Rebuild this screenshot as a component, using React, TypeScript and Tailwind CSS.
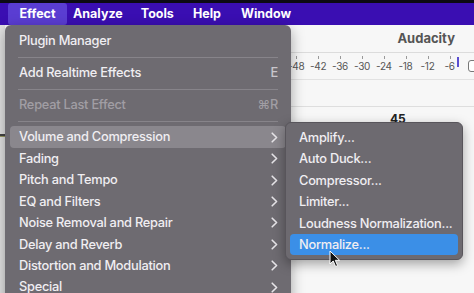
import type { ReactNode } from "react"

const font = { fontFamily: "Inter, 'Noto Sans', sans-serif" }

const Chevron = () => (
  <svg width="7" height="11" viewBox="0 0 7 11" className="shrink-0">
    <path d="M1.2 1.2 L5.6 5.5 L1.2 9.8" fill="none" stroke="#e6e4e8" strokeWidth="1.6" strokeLinecap="round" strokeLinejoin="round" />
  </svg>
)

const Separator = () => (
  <div className="h-[10px] flex items-center px-[13px]">
    <div className="h-px w-full bg-[#87848a]" />
  </div>
)

const Item = ({
  label,
  right,
  active,
  disabled,
  tall,
}: {
  label: string
  right?: ReactNode
  active?: boolean
  disabled?: boolean
  tall?: boolean
}) => (
  <div className={`${tall ? "h-[22px]" : "h-[21.4px]"} px-[5px]`}>
    <div
      className={`h-full flex items-center justify-between pl-[9px] pr-[8px] rounded-[4px] whitespace-nowrap ${
        active ? "bg-[#8a878d]" : ""
      } ${disabled ? "text-[#a19ea4]" : "text-[#f0eef2]"}`}
    >
      <span>{label}</span>
      {right}
    </div>
  </div>
)

const submenuItems = ["Volume and Compression", "Fading", "Pitch and Tempo", "EQ and Filters", "Noise Removal and Repair", "Delay and Reverb", "Distortion and Modulation", "Special"]

const volumeItems = ["Amplify...", "Auto Duck...", "Compressor...", "Limiter...", "Loudness Normalization...", "Normalize..."]

const ruler = ["-48", "-42", "-36", "-30", "-24", "-18", "-12", "-6"]

export default function App() {
  return (
    <div className="relative w-[474px] h-[293px] overflow-hidden bg-[#f4f4f4] flex flex-col" style={font}>
      <div className="h-[3px] bg-[#0c0a14]" />
      {/* menu bar */}
      <div className="h-[22px] bg-[#3a0eb2] flex items-center text-[12.5px] font-bold text-white pl-[8px] whitespace-nowrap">
        <div className="h-full w-[59px] flex items-center justify-center bg-[#5a3dd2] rounded-[3px]">Effect</div>
        <div className="ml-[6px]">Analyze</div>
        <div className="ml-[18px]">Tools</div>
        <div className="ml-[19px]">Help</div>
        <div className="ml-[20px]">Window</div>
      </div>

      {/* app window behind */}
      <div className="flex-1 flex">
        <div className="w-[5px] bg-[#e3e3e3] flex flex-col pt-[109px]">
          <div className="h-[2px] bg-[#444]" />
          <div className="h-px bg-[#9a9a60]" />
        </div>
        <div className="flex-1 bg-[#f7f7f7] flex flex-col pl-[283px] text-[#4a4a4a]">
          <div className="h-[27px] flex items-center justify-end pr-[19px] text-[13px] font-bold text-[#555]">Audacity</div>
          <div className="h-px bg-[#dcdcdc]" />
          <div className="h-[26px] flex items-center gap-[7px] text-[10px] text-[#555] tracking-[-0.3px] relative">
            {ruler.map((n) => (
              <div key={n} className="relative w-[15px] text-center">
                <div className="absolute left-1/2 -top-[3px] w-px h-[3px] bg-[#999]" />
                {n}
              </div>
            ))}
            <div className="absolute left-[169px] top-[4px] w-[2px] h-[10px] bg-[#5a4fd0]" />
            <div className="absolute left-[180px] top-[7px] w-[10px] h-[12px] rounded-[3px] bg-white border border-[#777]" />
          </div>
          <div className="h-px bg-[#e2e2e2]" />
          <div className="h-[26px]" />
          <div className="h-px bg-[#dedede]" />
          <div className="pl-[102px] pt-[3px] text-[12px] font-bold text-[#222]">45</div>
        </div>
      </div>

      {/* Effect menu */}
      <div className="absolute left-[5px] top-[25px] w-[286px] h-[280px] bg-[#6e6b71] rounded-[6px] shadow-[0_4px_14px_rgba(0,0,0,0.35)] pt-[5px] text-[12.8px] tracking-[-0.25px] font-medium">
        <Item label="Plugin Manager" tall />
        <Separator />
        <Item label="Add Realtime Effects" tall right={<span className="text-[#c9c6cc]">E</span>} />
        <Separator />
        <Item label="Repeat Last Effect" tall disabled right={<span>⌘R</span>} />
        <Separator />
        {submenuItems.map((s, i) => (
          <Item key={s} label={s} tall={i === 0} active={i === 0} right={<Chevron />} />
        ))}
      </div>

      {/* Volume and Compression submenu */}
      <div className="absolute left-[285px] top-[122px] w-[178px] h-[138px] bg-[#6d6a70] rounded-[6px] border border-[#58555b] shadow-[0_4px_12px_rgba(0,0,0,0.35)] pt-[4px] text-[12.8px] tracking-[-0.25px] font-medium">
        {volumeItems.map((s, i) => (
          <div key={s} className="h-[21.4px] px-[4px]">
            <div className={`h-full flex items-center pl-[9px] rounded-[4px] whitespace-nowrap text-[#f0eef2] ${i === 5 ? "bg-[#3b8fe7]" : ""}`}>{s}</div>
          </div>
        ))}
      </div>

      {/* mouse pointer */}
      <svg className="absolute left-[329px] top-[250px]" width="12" height="18" viewBox="0 0 12 18">
        <path d="M1 1 L1 14 L4.2 11 L6.6 16.5 L8.6 15.6 L6.3 10.3 L10.6 10.3 Z" fill="#111" stroke="#fff" strokeWidth="1" strokeLinejoin="round" />
      </svg>
    </div>
  )
}
